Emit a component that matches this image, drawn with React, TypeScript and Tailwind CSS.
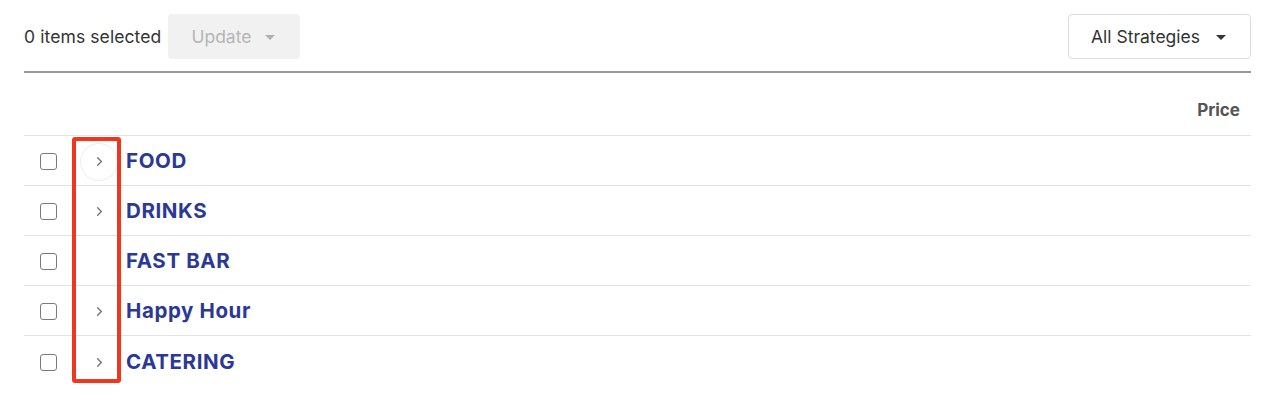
import { ChevronRight } from 'lucide-react';

const rows = [
  { name: 'FOOD', expandable: true, hover: true },
  { name: 'DRINKS', expandable: true },
  { name: 'FAST BAR', expandable: false },
  { name: 'Happy Hour', expandable: true },
  { name: 'CATERING', expandable: true, last: true },
];

function Caret({ className }: { className?: string }) {
  return (
    <svg width="10" height="5" viewBox="0 0 10 5" className={className}>
      <path d="M0 0h10L5 5z" fill="currentColor" />
    </svg>
  );
}

export default function App() {
  return (
    <div className="w-[1268px] h-[400px] bg-white overflow-hidden font-['Inter',sans-serif] text-[#333]">
      <div className="ml-[24px] w-[1227px] relative">
        {/* Toolbar */}
        <div className="flex items-center justify-between pt-[14px] h-[59px]">
          <div className="flex items-center gap-[7px]">
            <span className="pt-[2px] text-[17.5px] tracking-[0.1px] text-[#333]">0 items selected</span>
            <button className="flex items-center h-[45px] w-[132px] pl-[23px] pt-[2px] rounded-[4px] bg-[#f1f1f1] text-[#b5b5b5] text-[17.5px]">
              Update
              <Caret className="ml-[14px] text-[#b0b0b0]" />
            </button>
          </div>
          <button className="flex items-center h-[45px] w-[183px] pl-[22px] pt-[2px] rounded-[4px] border border-[#dcdcdc] bg-white text-[#333] text-[17.5px]">
            All Strategies
            <Caret className="ml-[16px] text-[#333]" />
          </button>
        </div>

        <div className="mt-[12px] h-[2px] bg-[#999]" />

        {/* Table header */}
        <div className="h-[63px] flex items-end justify-end pb-[12px] pr-[11px] border-b border-[#e2e2e2]">
          <span className="text-[17px] font-bold text-[#555]">Price</span>
        </div>

        {/* Rows */}
        {rows.map((r) => (
          <div
            key={r.name}
            className={`h-[50px] flex items-center pt-[2px] ${r.last ? '' : 'border-b border-[#e2e2e2]'}`}
          >
            <div className="w-[48px] pl-[16px] flex">
              <span className="w-[17px] h-[17px] rounded-[3px] border-[1.5px] border-[#7a7a7a] bg-white" />
            </div>
            <div className="w-[54px] flex justify-center">
              {r.expandable && (
                <span
                  className={`w-[38px] h-[38px] rounded-full flex items-center justify-center ${r.hover ? 'border border-[#eeeeee]' : ''}`}
                >
                  <ChevronRight size={15} strokeWidth={2.2} className="text-[#777]" />
                </span>
              )}
            </div>
            <span className="text-[20.5px] font-bold text-[#2b3897] tracking-[0.6px]">{r.name}</span>
          </div>
        ))}

        {/* Annotation box */}
        <div className="absolute left-[48px] top-[137px] w-[49px] h-[246px] border-[4px] border-[#f0361d] rounded-[3px] pointer-events-none" />
      </div>
    </div>
  );
}
